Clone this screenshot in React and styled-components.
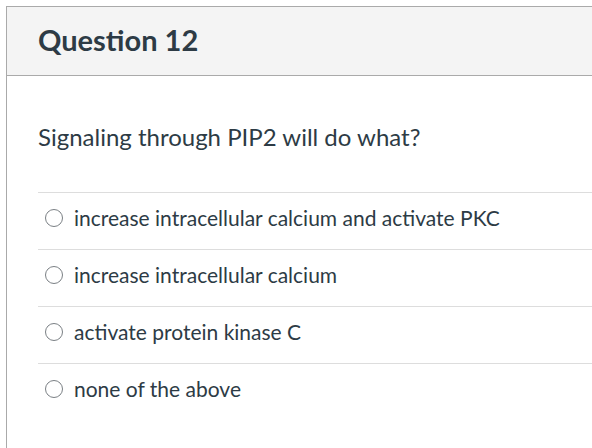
import React from 'react';
import styled, { createGlobalStyle } from 'styled-components';

const GlobalStyle = createGlobalStyle`
  html, body {
    margin: 0;
    padding: 0;
    background: #ffffff;
  }
  body {
    font-family: Lato, "Open Sans", sans-serif;
    color: #2d3b45;
  }
`;

const Page = styled.div`
  width: 592px;
  height: 448px;
  overflow: hidden;
  padding: 6px 0 0 6px;
  box-sizing: border-box;
`;

const Card = styled.div`
  width: 640px;
  height: 500px;
  border: 1px solid #aaaaaa;
  border-right: none;
  border-bottom: none;
  box-sizing: border-box;
`;

const Header = styled.div`
  height: 69px;
  background: #f4f4f4;
  border-bottom: 1px solid #aaaaaa;
  box-sizing: border-box;
  display: flex;
  align-items: center;
  padding-left: 31px;
`;

const Title = styled.h2`
  margin: 0;
  font-size: 29px;
  font-weight: 700;
  color: #2d3b45;
  padding-bottom: 4px;
`;

const Body = styled.div`
  padding: 46px 0 0 31px;
`;

const QuestionText = styled.p`
  margin: 0 0 40px;
  font-size: 24px;
  line-height: 30px;
`;

const AnswerList = styled.ul`
  list-style: none;
  margin: 0;
  padding: 0;
`;

const Answer = styled.li`
  display: flex;
  align-items: center;
  box-sizing: content-box;
  height: 49px;
  border-top: 1px solid #dddddd;
  padding: 0 0 7px 7px;
  font-size: 21px;
`;

const Radio = styled.span`
  width: 16px;
  height: 16px;
  border: 1.5px solid #7a7f84;
  border-radius: 50%;
  margin-right: 11px;
  flex-shrink: 0;
`;

const answers = [
  'increase intracellular calcium and activate PKC',
  'increase intracellular calcium',
  'activate protein kinase C',
  'none of the above',
];

export default function App() {
  return (
    <>
      <GlobalStyle />
      <Page>
        <Card>
          <Header>
            <Title>Question 12</Title>
          </Header>
          <Body>
            <QuestionText>Signaling through PIP2 will do what?</QuestionText>
            <AnswerList>
              {answers.map((a) => (
                <Answer key={a}>
                  <Radio />
                  {a}
                </Answer>
              ))}
            </AnswerList>
          </Body>
        </Card>
      </Page>
    </>
  );
}
